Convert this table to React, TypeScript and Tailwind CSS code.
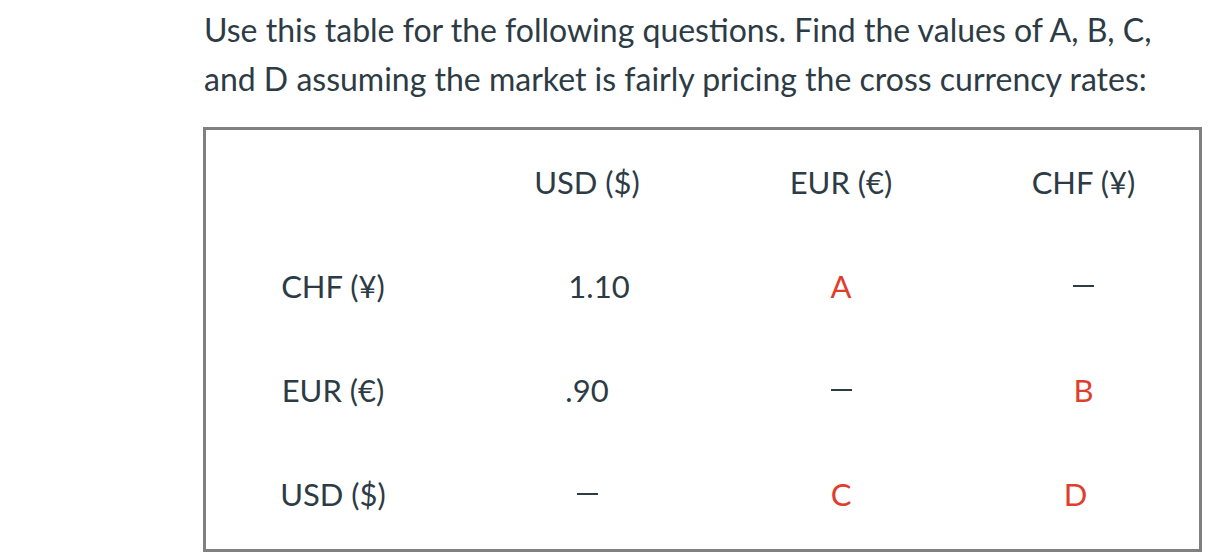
import React from "react";

const RED = "text-[#e03e2d]";

function Cell({ children, red = false }: { children: React.ReactNode; red?: boolean }) {
  return (
    <div className={`flex h-[104px] items-center justify-center ${red ? RED : ""}`}>
      {children}
    </div>
  );
}

function Dash() {
  return <span className="inline-block h-[2px] w-[21px] bg-[#2d3b45]" aria-label="—" />;
}

export default function App() {
  return (
    <div className="min-h-[556px] w-[1210px] bg-white text-[#2d3b45]" style={{ fontFamily: "Lato, 'Noto Sans', sans-serif" }}>
      <div className="pl-[203px] pt-[5px]">
        <p className="pl-[1px] text-[32px] leading-[49px]">
          Use this table for the following questions. Find the values of A, B, C,
          <br />
          and D assuming the market is fairly pricing the cross currency rates:
        </p>
        <div className="mt-[24px] w-[999px] border-[3px] border-[#808080] pb-[3px] text-[31px]">
          <div className="grid grid-cols-[254px_254px_254px_1fr]">
            <Cell>{""}</Cell>
            <Cell>USD ($)</Cell>
            <Cell>EUR (€)</Cell>
            <Cell>CHF (¥)</Cell>

            <Cell>CHF (¥)</Cell>
            <Cell><span className="pl-[24px]">1.10</span></Cell>
            <Cell red>A</Cell>
            <Cell><Dash /></Cell>

            <Cell>EUR (€)</Cell>
            <Cell>.90</Cell>
            <Cell><Dash /></Cell>
            <Cell red>B</Cell>

            <Cell>USD ($)</Cell>
            <Cell><Dash /></Cell>
            <Cell red>C</Cell>
            <Cell red><span className="pr-[16px]">D</span></Cell>
          </div>
        </div>
      </div>
    </div>
  );
}
